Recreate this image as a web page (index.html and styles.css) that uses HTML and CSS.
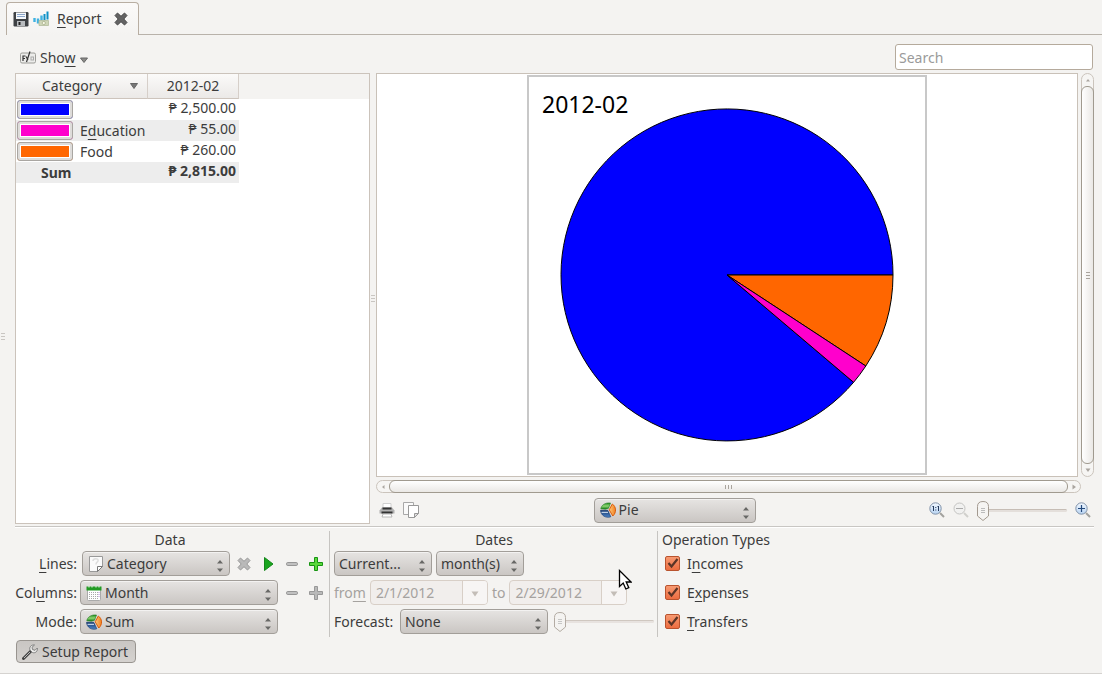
FILE: index.html
```html
<!DOCTYPE html>
<html lang="en">
<head>
<meta charset="utf-8">
<title>Report</title>
<link rel="stylesheet" href="styles.css">
</head>
<body>
<svg class="defs" width="0" height="0" aria-hidden="true">
  <defs>
    <linearGradient id="green" x1="0" y1="0" x2="0" y2="1"><stop offset="0" stop-color="#1f8a1f"/><stop offset=".5" stop-color="#8fd672"/><stop offset="1" stop-color="#0f7a12"/></linearGradient>
    <linearGradient id="blue" x1="0" y1="0" x2="0" y2="1"><stop offset="0" stop-color="#16386e"/><stop offset="1" stop-color="#4f86c8"/></linearGradient>
    <linearGradient id="orange" x1="0" y1="0" x2="1" y2="0"><stop offset="0" stop-color="#ffc87a"/><stop offset="1" stop-color="#f08020"/></linearGradient>
    <linearGradient id="lens" x1="0" y1="0" x2="0" y2="1"><stop offset="0" stop-color="#f2f8ff"/><stop offset="1" stop-color="#b7d3f2"/></linearGradient>
    <symbol id="i-pie" viewBox="0 0 16 16">
      <path d="M.8 6.800C1.500 3 5 .5 10.500 1L8.500 6.300 5.500 7.200Z" fill="url(#green)" stroke="#1e7a1e" stroke-width=".6"/>
      <path d="M.5 8.300 7.800 8.300 10.800 14.800C5.500 16.600 .8 13.300 .5 8.300Z" fill="url(#blue)" stroke="#18396f" stroke-width=".6"/>
      <path d="M1.500 10.300 8 10.300" stroke="#e4effb" stroke-width="1"/>
      <path d="M12.300 2C16.500 4.800 16.600 10.700 12.800 14L9.200 7.800Z" fill="url(#orange)" stroke="#d85400" stroke-width=".9"/>
    </symbol>
    <symbol id="i-minus" viewBox="0 0 16 16"><rect x="2.500" y="6.500" width="11" height="3" rx="1.300" fill="#c0c0c0" stroke="#969696"/></symbol>
    <symbol id="i-plus" viewBox="0 0 16 16"><path d="M6.500 1.500h3v5h5v3h-5v5h-3v-5h-5v-3h5z" stroke-linejoin="round"/></symbol>
    <symbol id="i-cross" viewBox="0 0 16 16"><path d="M4.500 2 8 5.300 11.500 2 14 4.500 10.800 8 14 11.500 11.500 14 8 10.700 4.500 14 2 11.500 5.200 8 2 4.500Z" stroke-linejoin="round"/></symbol>
  </defs>
</svg>

<header class="tabs">
  <div class="tab">
    <svg class="icon" viewBox="0 0 16 16"><rect x=".5" y="1" width="15" height="14.500" rx="1.200" fill="#3e4144"/><path d="M3 1.500h10V8H3z" fill="#f5f8fb"/><path d="M4 3.500h8M4 5.500h8" stroke="#7f9cc4" stroke-width=".9"/><path d="M4 10h8v5H4z" fill="#b9bcbf"/><path d="M5.500 11h2v3h-2z" fill="#222"/></svg>
    <svg class="icon" viewBox="0 0 16 16"><path d="M1.500 7v4M5 7.500v5M8.500 4.500v5" stroke="#3fb2e2" stroke-width="2.400"/><path d="M11.500 3v6M14.500.5v8" stroke="#0f91c7" stroke-width="2"/><path d="M6 9.500h9.500v5H6z" fill="#cfd6b8" stroke="#b4bc9c" stroke-width=".8"/><circle cx="10.800" cy="12" r="1.600" fill="#f6f7e8" stroke="#98a278" stroke-width=".6"/></svg>
    <span class="tab-title"><u>R</u>eport</span>
    <button class="plain" aria-label="Close tab"><svg class="icon fill-dark"><use href="#i-cross"/></svg></button>
  </div>
</header>

<main class="page">
  <div class="topbar">
    <button class="plain show">
      <svg class="icon" viewBox="0 0 16 16"><rect x=".5" y="3" width="15" height="10" rx="1.500" fill="#ececea" stroke="#9c9c98"/><path d="M3 11V6h2.500M3 8.500h2M6 6.500l2 3.500M10 1.500 6.500 12" fill="none" stroke="#333" stroke-width="1.200"/><rect x="11" y="7" width="2.500" height="3" fill="none" stroke="#aaa"/></svg>
      <span>Sho<u>w</u></span><svg class="caret" viewBox="0 0 8 6"><path d="M.5 1h7L4 5.500Z" fill="#8b8b88" stroke="#666"/></svg>
    </button>
    <input class="search" type="text" placeholder="Search" aria-label="Search">
  </div>

  <div class="split">
    <section class="list">
      <table>
        <thead><tr><th class="c-cat"><span class="head">Category<svg class="caret" viewBox="0 0 8 6"><path d="M.5.5h7L4 5.500Z" fill="#777" stroke="#666"/></svg></span></th><th class="c-val">2012-02</th></tr></thead>
        <tbody>
          <tr><td><span class="cat"><button class="swatch s-blue" aria-label="Colour"></button></span></td><td class="val">₱ 2,500.00</td></tr>
          <tr><td><span class="cat"><button class="swatch s-pink" aria-label="Education colour"></button><span>E<u>d</u>ucation</span></span></td><td class="val">₱ 55.00</td></tr>
          <tr><td><span class="cat"><button class="swatch s-orange" aria-label="Food colour"></button><span>Food</span></span></td><td class="val">₱ 260.00</td></tr>
          <tr class="sum"><td><span class="cat">Sum</span></td><td class="val">₱ 2,815.00</td></tr>
        </tbody>
      </table>
    </section>
    <div class="splitter"><i></i><i></i><i></i></div>
    <section class="chart">
      <div class="canvas">
        <svg class="scene" viewBox="0 0 400 400" role="img" aria-label="Pie chart for 2012-02">
          <rect x="1" y="1" width="398" height="398" fill="#fff" stroke="#c8c8c8" stroke-width="2"/>
          <g stroke="#000">
            <path d="M200 200 326.600 307.300A166 166 0 1 1 366 200Z" fill="#0000ff"/>
            <path d="M200 200H366A166 166 0 0 1 338.800 291Z" fill="#ff6600"/>
            <path d="M200 200 338.800 291A166 166 0 0 1 326.600 307.300Z" fill="#ff00cc"/>
          </g>
          <text class="scene-title" x="15" y="38">2012-02</text>
        </svg>
      </div>
      <div class="scroll vert"><button aria-label="Scroll up"><svg viewBox="0 0 6 6"><path d="M1 4.500h4L3 2Z"/></svg></button><div class="thumb"><i></i><i></i><i></i></div><button aria-label="Scroll down"><svg viewBox="0 0 6 6"><path d="M.5 1.500h5L3 5Z"/></svg></button></div>
      <div class="scroll horz"><button aria-label="Scroll left"><svg viewBox="0 0 6 6"><path d="M4.500 1v4L2 3Z"/></svg></button><div class="thumb"><i></i><i></i><i></i></div><button aria-label="Scroll right"><svg viewBox="0 0 6 6"><path d="M1.500.5v5L5 3Z"/></svg></button></div>
      <div class="tools">
        <div class="tools-side">
          <button class="plain" aria-label="Print"><svg class="icon" viewBox="0 0 16 16"><path d="M4 1.500h8V6H4z" fill="#fff" stroke="#d0d0d0"/><path d="M3 5.500h10l2.500 3v3H.5v-3z" fill="#b0b0b0"/><path d="M3.500 6.500h9M2.500 10.500h11" stroke="#333" stroke-width="2"/><path d="M4 12h8l1 3H3z" fill="#fff" stroke="#aaa" stroke-width=".8"/></svg></button>
          <button class="plain" aria-label="Copy"><svg class="icon" viewBox="0 0 16 16"><path d="M.5.5h10v12H.5z" fill="#fafafa" stroke="#a8a8a8"/><path d="M5.500 3.500h10v8l-4 4h-6z" fill="#fff" stroke="#999"/><path d="M15.500 11.500h-4v4z" fill="#ddd" stroke="#999"/></svg></button>
        </div>
        <span class="combo"><select aria-label="Chart type"><option>Pie</option></select><svg class="icon"><use href="#i-pie"/></svg></span>
        <div class="tools-side zoom">
          <button class="plain" aria-label="Actual size"><svg class="icon" viewBox="0 0 16 16"><path d="m11 11 4 4" stroke="#a2a29e" stroke-width="2"/><circle cx="6.500" cy="6.500" r="5.700" fill="url(#lens)" stroke="#8192a8"/><path d="M3.500 5l1-1v5M8.500 5l1-1v5M6.800 5v1M6.800 7.500v1" fill="none" stroke="#23395c"/></svg></button>
          <button class="plain" disabled aria-label="Zoom out"><svg class="icon" viewBox="0 0 16 16"><path d="m11 11 4 4" stroke="#d0d0cc" stroke-width="2"/><circle cx="6.500" cy="6.500" r="5.500" fill="#f1f1f0" stroke="#c4c4c2"/><path d="M3 6.500h7" stroke="#aaa"/></svg></button>
          <input class="slider" type="range" min="0" max="100" value="0" aria-label="Zoom">
          <button class="plain" aria-label="Zoom in"><svg class="icon" viewBox="0 0 16 16"><path d="m11 11 4 4" stroke="#a2a29e" stroke-width="2"/><circle cx="6.500" cy="6.500" r="5.700" fill="url(#lens)" stroke="#8192a8"/><path d="M3 6.500h7M6.500 3v7" stroke="#23497c" stroke-width="1.200"/></svg></button>
        </div>
      </div>
    </section>
  </div>

  <section class="setup">
    <div class="group data">
      <h2>Data</h2>
      <div class="row"><label for="lines"><u>L</u>ines:</label>
        <span class="combo w-lines"><select id="lines"><option>Category</option></select><svg class="icon" viewBox="0 0 16 16"><path d="M1.500.5h13v10l-5 5h-8z" fill="#fafafa" stroke="#999"/><path d="M14.500 10.500h-5v5z" fill="#fff" stroke="#777"/><path d="M5 5c0-3 6-3 5 0-.5 1.500-2 1-2 3.500" fill="none" stroke="#ddd" stroke-width="1.500"/></svg></span>
        <span class="actions">
          <button class="plain" disabled aria-label="Clear"><svg class="icon fill-grey"><use href="#i-cross"/></svg></button>
          <button class="plain" aria-label="Run"><svg class="icon" viewBox="0 0 16 16"><path d="M4.500 1.500 13 8 4.500 14.500Z" fill="#19a51e" stroke="#14861a" stroke-linejoin="round"/></svg></button>
          <button class="plain" disabled aria-label="Remove line"><svg class="icon"><use href="#i-minus"/></svg></button>
          <button class="plain" aria-label="Add line"><svg class="icon fill-green"><use href="#i-plus"/></svg></button>
        </span>
      </div>
      <div class="row"><label for="columns">Col<u>u</u>mns:</label>
        <span class="combo w-wide"><select id="columns"><option>Month</option></select><svg class="icon" viewBox="0 0 16 16"><rect x="1.500" y="3.500" width="13" height="12" rx="1" fill="#fff" stroke="#aaa"/><path d="M.5 1.500h15v4H.5z" fill="#239b24"/><path d="M3 .5v2M6 .5v2M10 .5v2M13 .5v2" stroke="#d9e9d8" stroke-width="1.200"/><path d="M3 7.500h9M3 9.500h9M3 11.500h9M3 13.500h9" stroke="#aaa" stroke-dasharray="1 1"/><path d="M13 7v6" stroke="#b78de2" stroke-dasharray="1 1"/></svg></span>
        <span class="actions">
          <button class="plain" disabled aria-label="Remove column"><svg class="icon"><use href="#i-minus"/></svg></button>
          <button class="plain" disabled aria-label="Add column"><svg class="icon fill-grey"><use href="#i-plus"/></svg></button>
        </span>
      </div>
      <div class="row"><label for="mode">Mode:</label>
        <span class="combo w-wide"><select id="mode"><option>Sum</option></select><svg class="icon"><use href="#i-pie"/></svg></span>
      </div>
    </div>

    <div class="group dates">
      <h2>Dates</h2>
      <div class="row">
        <span class="combo bare w-period"><select aria-label="Period"><option>Current...</option></select></span>
        <span class="combo bare w-unit"><select aria-label="Unit"><option>month(s)</option></select></span>
      </div>
      <div class="row off"><label for="from">fro<u>m</u></label>
        <span class="date"><input id="from" type="text" value="2/1/2012" disabled><button disabled aria-label="Pick start date"><svg class="caret" viewBox="0 0 8 6"><path d="M.5.5h7L4 5.500Z"/></svg></button></span>
        <label for="to">to</label>
        <span class="date"><input id="to" type="text" value="2/29/2012" disabled><button disabled aria-label="Pick end date"><svg class="caret" viewBox="0 0 8 6"><path d="M.5.5h7L4 5.500Z"/></svg></button></span>
      </div>
      <div class="row"><label class="w-label" for="forecast">Forecast:</label>
        <span class="combo bare w-lines"><select id="forecast"><option>None</option></select></span>
        <input class="slider muted" type="range" min="0" max="100" value="0" aria-label="Forecast amount">
      </div>
      <svg class="pointer" viewBox="0 0 14 22"><path d="M1.500 1.500v16l3.700-3.400 2.600 5.900 3-1.300-2.600-5.700h4.800Z" fill="#fff" stroke="#000" stroke-width="1.300"/></svg>
    </div>

    <div class="group types">
      <h2>Operation Types</h2>
      <label class="row check"><input type="checkbox" checked><span>I<u>n</u>comes</span></label>
      <label class="row check"><input type="checkbox" checked><span>E<u>x</u>penses</span></label>
      <label class="row check"><input type="checkbox" checked><span><u>T</u>ransfers</span></label>
    </div>
  </section>
  <button class="setup-btn"><svg class="icon" viewBox="0 0 16 16"><path d="M1.500 14.500 9 7" stroke="#444" stroke-width="3" stroke-linecap="round"/><path d="m2 14 6-6" stroke="#bbb" stroke-width="1"/><path d="M12.500 1C9 .5 7 3.500 8 6l2.500 2.500C13 9.500 16 7.500 15.300 4L13 6.300l-2.500-.8L10 3.300Z" fill="#ececea" stroke="#777" stroke-width=".9"/></svg>Setup Report</button>
</main>
<div class="grip"><i></i><i></i><i></i></div>
</body>
</html>
```
FILE: styles.css
```css
* { box-sizing: border-box; }
body {
  margin: 0;
  min-height: 100vh;
  display: flex;
  flex-direction: column;
  position: relative;
  background: #f4f3f1;
  border-bottom: 1px solid #d5d3d0;
  color: #3c3c3c;
  font: 14px/20px "Noto Sans", "Open Sans", sans-serif;
}
.defs { position: absolute; }
button, input, select { font: inherit; color: inherit; margin: 0; }
u { text-decoration: underline; text-decoration-thickness: 1px; text-underline-offset: 3px; text-decoration-skip-ink: none; }
svg { display: block; flex: none; }
.icon { width: 16px; height: 16px; }
.caret { width: 8px; height: 6px; }
.plain { display: flex; align-items: center; padding: 0; border: 0; background: none; }
.fill-dark { fill: #636363; stroke: #484848; }
.fill-grey { fill: #b9b9b9; stroke: #989898; }
.fill-green { fill: #5bd83c; stroke: #179413; }

/* Tabs */
.tabs { display: flex; height: 35px; padding: 2px 0 0 6px; }
.tabs::after { content: ""; flex: 1; border-bottom: 1px solid #b8b2aa; }
.tab {
  display: flex;
  align-items: center;
  gap: 4px;
  width: 133px;
  padding: 0 9px 0 6px;
  border: 1px solid #b8aea2;
  border-bottom: 0;
  border-radius: 4px 4px 0 0;
  background: linear-gradient(#fbfaf9, #f4f3f1);
}
.tab-title { flex: 1; padding-left: 4px; }

/* Page */
.page { flex: 1; display: flex; flex-direction: column; padding: 0 8px 10px 15px; }
.topbar { display: flex; align-items: center; justify-content: space-between; height: 38px; padding: 8px 1px 0 5px; }
.show { gap: 4px; }
.show .caret { margin-top: 4px; }
.search {
  width: 198px;
  height: 26px;
  margin-bottom: 2px;
  padding: 0 3px;
  border: 1px solid #b5aa9c;
  border-radius: 3px;
  background: #fff;
}
.search::placeholder { color: #9a9a9a; opacity: 1; }
.split { flex: 1; display: flex; margin-bottom: 2px; }
.list { width: 355px; border: 1px solid #cbc3bb; background: linear-gradient(#f4f3f1 25px, #fff 25px); }
.splitter { display: flex; flex-direction: column; justify-content: center; align-items: center; gap: 2px; width: 6px; }
.splitter i, .grip i { width: 4px; height: 1px; background: #c9c6c2; }
.grip { position: absolute; left: 1px; top: 50%; display: grid; gap: 2px; margin-top: -4px; }

/* Table */
table { width: 223px; border-collapse: separate; border-spacing: 0; table-layout: fixed; }
th {
  height: 25px;
  padding: 0;
  border-right: 1px solid #d6cfc9;
  border-bottom: 1px solid #cdc4bc;
  background: linear-gradient(#fbfaf9, #ebe9e7);
  font-weight: 400;
}
.c-cat { width: 132px; }
.head { display: flex; align-items: center; justify-content: space-between; padding: 0 9px 0 26px; }
td { height: 21px; padding: 0; line-height: 18px; white-space: nowrap; }
tbody tr:nth-child(even) { background: #ededed; }
.cat { display: flex; align-items: center; gap: 7px; height: 21px; padding-left: 1px; }
.val { padding: 0 3px 3px 0; text-align: right; }
.sum { font-weight: 700; }
.sum .cat { padding-left: 25px; }
.swatch {
  width: 56px;
  height: 19px;
  padding: 0;
  border: 1px solid #a9a6a2;
  border-radius: 3px;
  box-shadow: inset 0 0 0 2px #dedcda, inset 0 0 0 3px #fff;
}
.s-blue { background: #0000ff; }
.s-pink { background: #ff00cc; }
.s-orange { background: #ff6600; }

/* Chart */
.chart {
  flex: 1;
  display: grid;
  grid-template-columns: 1fr 13px;
  grid-template-rows: 1fr 13px 28px;
  column-gap: 3px;
  row-gap: 3px;
}
.canvas { display: flex; align-items: center; justify-content: center; border: 1px solid #c9c1b8; background: #fff; }
.scene { width: 400px; height: 400px; }
.scene-title { font-size: 23px; fill: #000; }
.scroll { display: flex; border: 1px solid #cbc4bc; border-radius: 7px; background: #f6f5f3; }
.scroll button { flex: none; display: flex; align-items: center; justify-content: center; width: 12px; height: 12px; padding: 0; border: 0; background: none; }
.scroll button svg { width: 6px; height: 6px; fill: #aaa59f; }
.vert { flex-direction: column; }
.vert button { width: 11px; }
.horz { width: calc(100% + 3px); }
.horz button { height: 11px; }
.thumb { flex: 1; display: flex; align-items: center; justify-content: center; gap: 2px; border: 1px solid #a09a8f; border-radius: 6px; background: linear-gradient(#fff, #eae8e5); }
.vert .thumb { flex-direction: column; margin: 0 -1px; background: linear-gradient(90deg, #fff, #eae8e5); }
.horz .thumb { margin: -1px 0; }
.thumb i { width: 1px; height: 4px; background: #a9a49d; }
.vert .thumb i { width: 4px; height: 1px; }
.tools { grid-column: 1 / -1; display: grid; grid-template-columns: 9fr 162px 14fr; align-items: center; }
.tools-side { display: flex; align-items: center; gap: 8px; padding-left: 3px; }
.zoom { justify-content: flex-end; padding: 0 3px 0 0; }
.zoom .slider { width: 90px; }

/* Combo boxes */
.combo { display: inline-grid; align-items: center; }
.combo > * { grid-area: 1 / 1; }
.combo .icon { margin-left: 6px; pointer-events: none; }
.combo select {
  width: 100%;
  height: 25px;
  padding: 0 20px 0 24px;
  border: 1px solid #a29e99;
  border-radius: 4px;
  appearance: none;
  background:
    url("data:image/svg+xml,%3Csvg xmlns='http://www.w3.org/2000/svg' width='8' height='14'%3E%3Cpath d='M1 4.500h6L4 1zM1 9.500h6L4 13z' fill='%23686866'/%3E%3C/svg%3E") right 5px top 7px no-repeat,
    linear-gradient(#e6e4e2, #cac6c3);
  box-shadow: inset 0 1px #f3f2f1;
}
.combo.bare select { padding-left: 4px; }
.w-lines { width: 148px; }
.w-wide { width: 198px; }
.w-period { width: 98px; }
.w-unit { width: 88px; }

/* Sliders */
.slider { width: 100px; height: 22px; appearance: none; background: none; }
.slider::-webkit-slider-runnable-track { height: 3px; border-top: 1px solid #c6bdb5; border-radius: 2px; background: #e4dfdb; }
.slider::-webkit-slider-thumb {
  appearance: none;
  width: 12px;
  height: 20px;
  margin-top: -9px;
  background: url("data:image/svg+xml,%3Csvg xmlns='http://www.w3.org/2000/svg' width='12' height='20'%3E%3Cpath d='M.5 5.500Q.5.5 6 .5t5.500 5V15L6 19.500.5 15z' fill='%23f5f4f2' stroke='%23a39a90'/%3E%3Cpath d='M4 7.500h4M4 9.500h4M4 11.500h4' stroke='%23bbb'/%3E%3C/svg%3E") no-repeat;
}
.slider.muted { opacity: .8; margin-left: 2px; }

/* Setup panel */
.setup { display: flex; padding-top: 4px; border-top: 1px solid #c8c6c3; box-shadow: inset 0 1px #fff; }
.group { position: relative; display: grid; grid-template-rows: 16px 25px 25px 25px; row-gap: 4px; padding: 0 4px 3px; }
.group + .group { border-left: 1px solid #c6c4c1; }
.group h2 { margin: 0; font-size: 14px; font-weight: 400; line-height: 18px; text-align: center; }
.row { display: flex; align-items: center; gap: 3px; }
.data { width: 314px; padding-left: 0; }
.data .row label { width: 62px; text-align: right; }
.data .w-lines { margin-left: 2px; }
.actions { display: flex; gap: 8px; padding-left: 3px; }
.dates { width: 328px; }
.dates .row { gap: 4px; }
.w-label { width: 62px; }
.off { color: #a5a29f; }
.date { display: flex; width: 118px; height: 25px; border: 1px solid #d8cfc7; border-radius: 4px; background: #f1eeec; }
.date input { flex: 1; min-width: 0; padding: 0 5px; border: 0; background: none; }
.date button { display: flex; align-items: center; justify-content: center; width: 25px; padding: 3px 0 0; border: 0; border-left: 1px solid #d8cfc7; border-radius: 0 3px 3px 0; background: #f7f5f4; }
.date .caret { fill: #c3bdb7; }
.pointer { position: absolute; left: 288px; top: 38px; width: 14px; height: 22px; }
.check { gap: 7px; padding-left: 3px; }
.check input {
  width: 15px;
  height: 15px;
  appearance: none;
  border: 1px solid #b9532e;
  border-radius: 2px;
  background: url("data:image/svg+xml,%3Csvg xmlns='http://www.w3.org/2000/svg' width='13' height='13'%3E%3Cpath d='M2.500 6 5.500 9.500 11.500 2' fill='none' stroke='%235b3426' stroke-width='2.200'/%3E%3C/svg%3E") center no-repeat, linear-gradient(#f79a72, #ec6c40);
}
.setup-btn {
  display: flex;
  align-items: center;
  align-self: flex-start;
  gap: 4px;
  height: 23px;
  margin: 3px 0 0 1px;
  padding: 0 7px 0 5px;
  border: 1px solid #98948f;
  border-radius: 4px;
  background: linear-gradient(#c9c6c3, #d5d2cf);
}
```
